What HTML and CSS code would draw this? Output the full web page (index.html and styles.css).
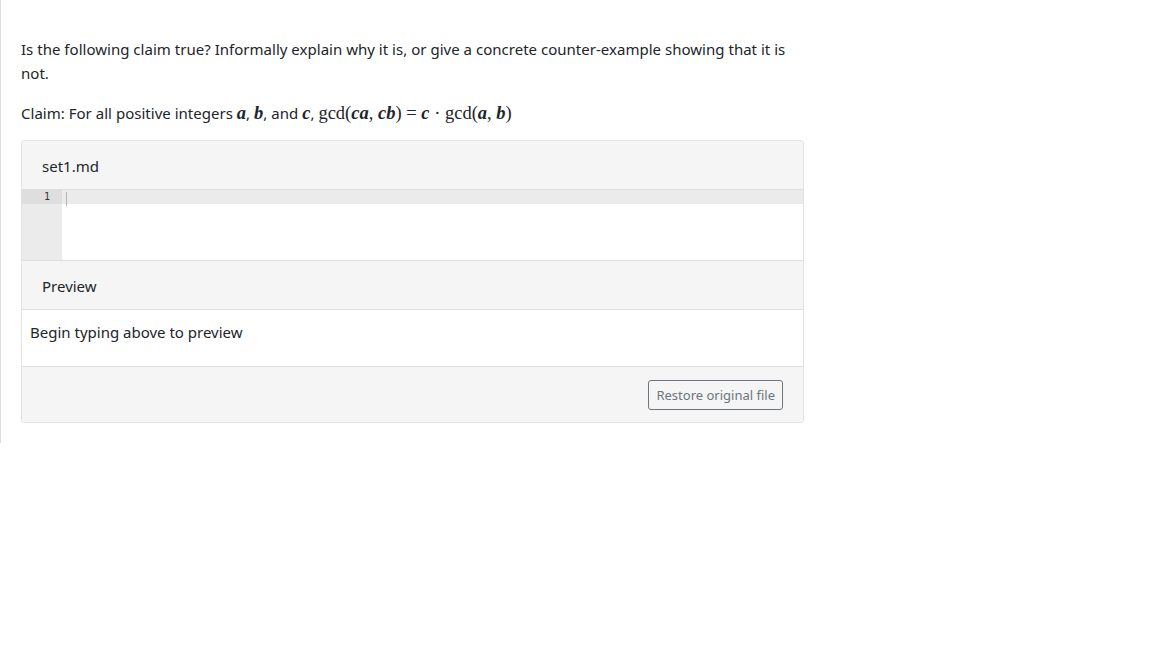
FILE: index.html
```html
<!DOCTYPE html>
<html>
<head>
<meta charset="utf-8">
<link rel="stylesheet" href="styles.css">
</head>
<body>
<div class="page">
  <p class="q">Is the following claim true? Informally explain why it is, or give a concrete counter-example showing that it is not.</p>
  <p class="claim">Claim: For all positive integers <span class="m"><i>a</i></span>, <span class="m"><i>b</i></span>, and <span class="m"><i>c</i></span>, <span class="m">gcd(<i>ca</i>, <i>cb</i>) <span class="op">=</span> <i>c</i> <span class="op">·</span> gcd(<i>a</i>, <i>b</i>)</span></p>
  <div class="card">
    <div class="card-head">set1.md</div>
    <div class="editor">
      <div class="gutter"><div class="ln active">1</div></div>
      <div class="lines"><div class="line active"><span class="cursor"></span></div></div>
    </div>
    <div class="card-head sep">Preview</div>
    <div class="preview">Begin typing above to preview</div>
    <div class="card-foot"><button class="btn">Restore original file</button></div>
  </div>
</div>
</body>
</html>
```
FILE: styles.css
```css
html, body { margin: 0; padding: 0; background: #fff; }
body { font-family: "Noto Sans", "Open Sans", sans-serif; color: #212529; font-size: 15px; }
.page {
  border-left: 1px solid #dcdcdc;
  padding: 37px 20px 20px 20px;
  width: 783px;
}
.q { margin: 0 0 16px; line-height: 24px; font-size: 15px; letter-spacing: 0.02px; }
.claim { margin: 0 0 15px; line-height: 24px; font-size: 15px; letter-spacing: 0.02px; }
.m { font-family: "Liberation Serif", "DejaVu Serif", serif; font-size: 18.5px; letter-spacing: 0; }
.m i { font-style: italic; font-weight: bold; }
.op { margin: 0; }
.card {
  border: 1px solid #e2e2e2;
  border-radius: 3px;
  overflow: hidden;
}
.card-head {
  background: #f5f5f5;
  height: 48px;
  line-height: 50px;
  padding: 0 20px;
  font-size: 15px;
  border-bottom: 1px solid #dedede;
}
.card-head.sep { border-top: 1px solid #dedede; }
.editor { display: flex; height: 70px; background: #fff; }
.gutter { width: 40px; background: #ebebeb; }
.ln { height: 14px; line-height: 14px; text-align: right; padding-right: 12px; font-family: "DejaVu Sans Mono", monospace; font-size: 10px; color: #333; }
.ln.active { background: #dedede; }
.lines { flex: 1; }
.line { height: 14px; padding-left: 4px; }
.line.active { background: #ebebeb; }
.cursor { display: inline-block; width: 1px; height: 14px; background: #b5b5b5; }
.preview { height: 57px; padding: 10px 8px 0; box-sizing: border-box; font-size: 15px; line-height: 24px; border-bottom: 1px solid #dedede; }
.card-foot { background: #f5f5f5; height: 55px; display: flex; align-items: center; justify-content: flex-end; padding: 0 20px; }
.btn {
  font-family: "Noto Sans", "Open Sans", sans-serif;
  font-size: 13px;
  color: #6c757d;
  background: transparent;
  border: 1px solid #6c757d;
  border-radius: 3px;
  height: 30px;
  padding: 0 7px;
}
```
